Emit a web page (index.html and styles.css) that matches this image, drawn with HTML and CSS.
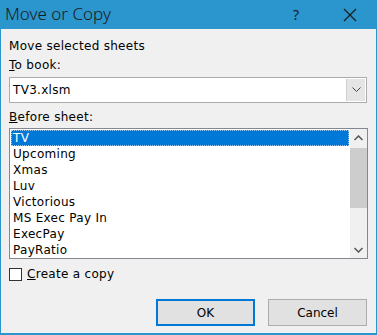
FILE: index.html
```html
<!DOCTYPE html>
<html lang="en">
<head>
  <meta charset="UTF-8">
  <link rel="stylesheet" href="styles.css">
  <title>Move or Copy</title>
</head>
<body>
  <div class="window">
    <header class="titlebar">
      <span class="title">Move or Copy</span>
      <span class="help">?</span>
      <svg class="close" width="14" height="14" viewBox="0 0 14 14">
        <path d="M1 1L13 13M13 1L1 13" stroke="#1b1b1b" stroke-width="1.2" fill="none"/>
      </svg>
    </header>
    <main class="dialog">
      <div class="line">Move selected sheets</div>
      <div class="line label"><u>T</u>o book:</div>
      <div class="combo">
        <span class="combo-value">TV3.xlsm</span>
        <span class="combo-btn">
          <svg width="9" height="6" viewBox="0 0 9 6"><path d="M0.5 0.5L4.5 4.5L8.5 0.5" stroke="#444" fill="none"/></svg>
        </span>
      </div>
      <div class="line label label-list"><u>B</u>efore sheet:</div>
      <div class="listbox">
        <ul class="items">
          <li class="selected">TV</li>
          <li>Upcoming</li>
          <li>Xmas</li>
          <li>Luv</li>
          <li>Victorious</li>
          <li>MS Exec Pay In</li>
          <li>ExecPay</li>
          <li>PayRatio</li>
        </ul>
        <div class="scrollbar">
          <span class="arrow">
            <svg width="9" height="6" viewBox="0 0 9 6"><path d="M0.5 5L4.5 1L8.5 5" stroke="#555" stroke-width="1.5" fill="none"/></svg>
          </span>
          <span class="thumb"></span>
          <span class="track"></span>
          <span class="arrow">
            <svg width="9" height="6" viewBox="0 0 9 6"><path d="M0.5 1L4.5 5L8.5 1" stroke="#555" stroke-width="1.5" fill="none"/></svg>
          </span>
        </div>
      </div>
      <label class="check">
        <span class="box"></span>
        <span><u>C</u>reate a copy</span>
      </label>
      <div class="buttons">
        <button class="btn btn-default">OK</button>
        <button class="btn">Cancel</button>
      </div>
    </main>
  </div>
</body>
</html>
```

FILE: styles.css
```css
body {
  margin: 0;
  width: 377px;
  height: 335px;
  overflow: hidden;
  font-family: 'DejaVu Sans', sans-serif;
  font-size: 12px;
  letter-spacing: 0.3px;
  color: #000;
}

.window {
  height: 335px;
  box-sizing: border-box;
  border: 1px solid #2b95cd;
  border-top: none;
  border-bottom-width: 2px;
  background-color: #f0f0f0;
  display: flex;
  flex-direction: column;
}

.titlebar {
  height: 29px;
  margin: 0 -1px;
  background-color: #2b95cd;
  display: flex;
  align-items: center;
  padding-left: 5px;
  letter-spacing: 0;
}

.title {
  flex: 1;
  font-family: 'Noto Sans', sans-serif;
  font-weight: 300;
  font-size: 17px;
  color: #1b1b1b;
  margin-top: -2px;
}

.help {
  font-family: 'Noto Sans', sans-serif;
  font-size: 14px;
  color: #1b1b1b;
  margin-right: 44px;
}

.close {
  margin-right: 20px;
}

.dialog {
  padding: 9px 8px 0 8px;
}

.line {
  height: 16px;
  line-height: 16px;
}

.label {
  margin-top: 3px;
}

.label-list {
  margin-top: 6px;
}

.combo {
  margin-top: 4px;
  width: 358px;
  height: 26px;
  box-sizing: border-box;
  border: 1px solid #acacac;
  background-color: #fff;
  display: flex;
  align-items: stretch;
}

.combo-value {
  flex: 1;
  line-height: 24px;
  padding-left: 3px;
}

.combo-btn {
  width: 18px;
  margin: 1px;
  background-color: #e5e5e5;
  border-left: 1px solid #d0d0d0;
  display: flex;
  align-items: center;
  justify-content: center;
}

.listbox {
  margin-top: 3px;
  width: 359px;
  height: 131px;
  box-sizing: border-box;
  border: 1px solid #828790;
  background-color: #fff;
  display: flex;
  overflow: hidden;
}

.items {
  flex: 1;
  list-style: none;
  margin: 0;
  padding: 1px 1px 0 1px;
}

.items li {
  height: 16px;
  line-height: 16px;
  padding-left: 2px;
}

.items li.selected {
  background-color: #0078d7;
  color: #fff;
  outline: 1px dotted #9fc8ec;
  outline-offset: -1px;
}

.scrollbar {
  width: 17px;
  background-color: #f0f0f0;
  display: flex;
  flex-direction: column;
}

.arrow {
  height: 17px;
  display: flex;
  align-items: center;
  justify-content: center;
}

.thumb {
  height: 60px;
  margin-top: 2px;
  background-color: #cdcdcd;
}

.track {
  flex: 1;
}

.check {
  margin-top: 7px;
  height: 16px;
  display: flex;
  align-items: center;
  gap: 5px;
}

.box {
  width: 13px;
  height: 13px;
  box-sizing: border-box;
  border: 1px solid #333;
  background-color: #fff;
}

.buttons {
  margin-top: 17px;
  display: flex;
  justify-content: flex-end;
  gap: 13px;
  padding-right: 1px;
}

.btn {
  width: 99px;
  height: 27px;
  box-sizing: border-box;
  border: 1px solid #adadad;
  background-color: #e1e1e1;
  font-family: 'DejaVu Sans', sans-serif;
  font-size: 12px;
  color: #000;
  padding: 0;
}

.btn-default {
  border: 2px solid #0078d7;
}
```
